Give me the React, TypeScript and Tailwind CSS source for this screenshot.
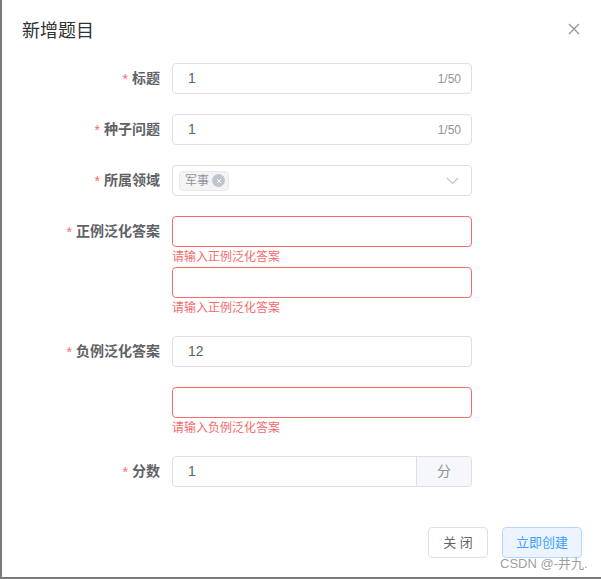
import React from 'react';

const font = { fontFamily: '"Liberation Sans", "Noto Sans CJK SC", sans-serif' };

const Label = ({ text }: { text?: string }) => (
  <div className="w-[170px] pr-[12px] h-[31px] flex items-center justify-end shrink-0">
    {text && (
      <>
        <span className="text-[#f56c6c] text-[14px] mr-[4px] leading-none">*</span>
        <span className="text-[14px] font-bold text-[#606266]">{text}</span>
      </>
    )}
  </div>
);

const TextInput = ({ value, count, error }: { value?: string; count?: string; error?: boolean }) => (
  <div
    className={`w-[300px] h-[31px] rounded-[4px] border bg-white flex items-center pl-[15px] pr-[10px] ${
      error ? 'border-[#f56c6c]' : 'border-[#dcdfe6]'
    }`}
  >
    <span className="flex-1 text-[14px] text-[#606266]">{value}</span>
    {count && <span className="text-[12px] text-[#909399]">{count}</span>}
  </div>
);

const ErrorText = ({ text }: { text: string }) => (
  <div className="h-[20px] text-[12px] leading-[20px] text-[#f56c6c]">{text}</div>
);

const App = () => {
  return (
    <div className="w-[601px] h-[579px] bg-white border-l-2 border-b-2 border-[#7a7a7a] relative overflow-hidden" style={font}>
      {/* Header */}
      <div className="flex items-start justify-between pl-[20px] pr-[21px] pt-[19px] h-[43px]">
        <span className="text-[18px] leading-[24px] text-[#303133]">新增题目</span>
        <svg className="mt-[4px]" width="12" height="12" viewBox="0 0 12 12" fill="none" stroke="#909399" strokeWidth="1.2">
          <path d="M1 1 L11 11 M11 1 L1 11" />
        </svg>
      </div>

      {/* Body */}
      <div className="pt-[20px]">
        <div className="flex mb-[20px]">
          <Label text="标题" />
          <TextInput value="1" count="1/50" />
        </div>
        <div className="flex mb-[20px]">
          <Label text="种子问题" />
          <TextInput value="1" count="1/50" />
        </div>
        <div className="flex mb-[20px]">
          <Label text="所属领域" />
          <div className="w-[300px] h-[31px] rounded-[4px] border border-[#dcdfe6] flex items-center pl-[6px] pr-[12px]">
            <div className="flex items-center h-[20px] rounded-[4px] border border-[#e9e9eb] bg-[#f4f4f5] pl-[5px] pr-[3px] gap-[3px]">
              <span className="text-[12px] text-[#909399] leading-none">军事</span>
              <span className="w-[13px] h-[13px] rounded-full bg-[#c0c4cc] flex items-center justify-center">
                <svg width="6" height="6" viewBox="0 0 6 6" stroke="#ffffff" strokeWidth="1">
                  <path d="M1 1 L5 5 M5 1 L1 5" />
                </svg>
              </span>
            </div>
            <div className="flex-1" />
            <svg width="13" height="8" viewBox="0 0 13 8" fill="none" stroke="#c0c4cc" strokeWidth="1.2">
              <path d="M1 1 L6.5 6.5 L12 1" />
            </svg>
          </div>
        </div>

        <div className="flex">
          <Label text="正例泛化答案" />
          <div className="flex flex-col">
            <TextInput error />
            <ErrorText text="请输入正例泛化答案" />
            <TextInput error />
            <ErrorText text="请输入正例泛化答案" />
          </div>
        </div>
        <div className="h-[18px]" />

        <div className="flex">
          <Label text="负例泛化答案" />
          <div className="flex flex-col">
            <TextInput value="12" />
            <div className="h-[20px]" />
            <TextInput error />
            <ErrorText text="请输入负例泛化答案" />
          </div>
        </div>
        <div className="h-[18px]" />

        <div className="flex">
          <Label text="分数" />
          <div className="w-[300px] h-[31px] rounded-[4px] border border-[#dcdfe6] flex">
            <div className="flex-1 flex items-center pl-[15px] text-[14px] text-[#606266]">1</div>
            <div className="w-[55px] border-l border-[#dcdfe6] bg-[#f5f7fa] rounded-r-[4px] flex items-center justify-center text-[14px] text-[#909399]">
              分
            </div>
          </div>
        </div>
      </div>

      {/* Footer */}
      <div className="flex justify-end gap-[14px] pr-[19px] mt-[40px]">
        <button className="w-[60px] h-[31px] rounded-[4px] border border-[#dcdfe6] bg-white text-[13px] text-[#606266]">
          关 闭
        </button>
        <button className="w-[80px] h-[31px] rounded-[4px] border border-[#b3d8ff] bg-[#ecf5ff] text-[13px] text-[#409eff]">
          立即创建
        </button>
      </div>

      {/* Watermark */}
      <div className="absolute left-[498px] top-[554px] text-[13px] text-[#a0a0a0]">CSDN @-井九.</div>
    </div>
  );
};

export default App;
